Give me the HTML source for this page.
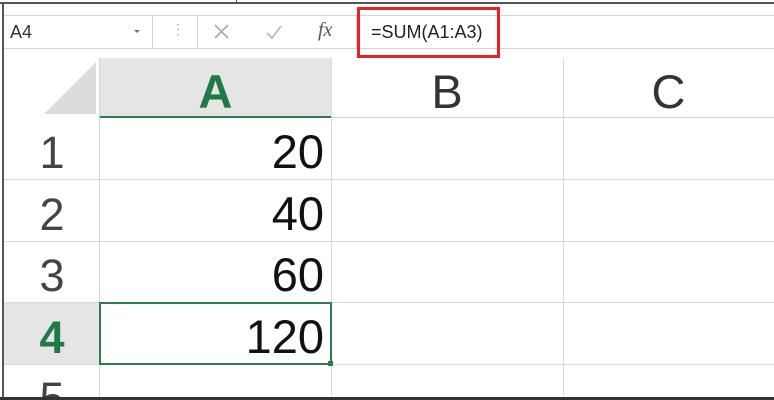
<!DOCTYPE html>
<html style="width:774px;height:400px;overflow:hidden"><head><meta charset="utf-8"><style>
*{margin:0;padding:0;box-sizing:border-box}
body{width:774px;height:400px;background:#fff;position:relative;overflow:hidden;font-family:"Liberation Sans",Arial,sans-serif}
.a{position:absolute}
.t{position:absolute;line-height:1}
</style></head><body>
<div class="a" style="left:0;top:2px;width:774px;height:2px;background:#555"></div>
<div class="a" style="left:2px;top:2px;width:2px;height:398px;background:#555"></div>
<div class="a" style="left:236px;top:0;width:1px;height:3px;background:#555"></div>
<div class="a" style="left:4px;top:15px;width:770px;height:1px;background:#d4d4d4"></div>
<div class="a" style="left:4px;top:48px;width:770px;height:1px;background:#d4d4d4"></div>
<div class="a" style="left:4px;top:15px;width:149px;height:34px;border:1px solid #d4d4d4;border-left:none"></div>
<div class="t" style="left:10px;top:23px;font-size:18px;color:#333">A4</div>
<div class="a" style="left:134px;top:30px;border-left:3px solid transparent;border-right:3px solid transparent;border-top:3px solid #777"></div>
<div class="t" style="left:171px;top:22px;font-size:14px;color:#aaa">⋮</div>
<div class="a" style="left:197px;top:15px;width:160px;height:34px;border:1px solid #d4d4d4"></div>
<svg class="a" style="left:212px;top:22px" width="100" height="22"><path d="M3 3L16 16M16 3L3 16" stroke="#aaa" stroke-width="1.6" fill="none"/><path d="M55 11L60 16L69 4" stroke="#bbb" stroke-width="1.8" fill="none"/></svg>
<div class="t" style="left:318px;top:20px;font-size:20px;font-style:italic;font-family:'Liberation Serif',serif;color:#555">fx</div>
<div class="a" style="left:357px;top:7px;width:143px;height:51px;border:3px solid #e3222b"></div>
<div class="t" style="left:371px;top:23px;font-size:18px;color:#222">=SUM(A1:A3)</div>
<div class="a" style="left:100px;top:58px;width:231px;height:59px;background:#e5e5e5"></div>
<div class="a" style="left:100px;top:116px;width:231px;height:2px;background:#2e7d4f"></div>
<svg class="a" style="left:40px;top:58px" width="60" height="59"><polygon points="56,4 56,56 4,56" fill="#dcdcdc"/></svg>
<div class="a" style="left:4px;top:302px;width:96px;height:62px;background:#e5e5e5"></div>
<div class="a" style="left:99px;top:58px;width:1px;height:342px;background:#d4d4d4"></div>
<div class="a" style="left:331px;top:58px;width:1px;height:342px;background:#d9d9d9"></div>
<div class="a" style="left:563px;top:58px;width:1px;height:342px;background:#d9d9d9"></div>
<div class="a" style="left:331px;top:117px;width:443px;height:1px;background:#d4d4d4"></div>
<div class="a" style="left:4px;top:179px;width:770px;height:1px;background:#d9d9d9"></div>
<div class="a" style="left:4px;top:241px;width:770px;height:1px;background:#d9d9d9"></div>
<div class="a" style="left:4px;top:302px;width:770px;height:1px;background:#d9d9d9"></div>
<div class="a" style="left:4px;top:364px;width:770px;height:1px;background:#d9d9d9"></div>
<div class="t" style="left:100px;top:68px;width:231px;text-align:center;font-size:47px;font-weight:bold;color:#1f7a45">A</div>
<div class="t" style="left:331px;top:68px;width:232px;text-align:center;font-size:47px;color:#333">B</div>
<div class="t" style="left:563px;top:68px;width:211px;text-align:center;font-size:47px;color:#333">C</div>
<div class="t" style="left:4px;top:130px;width:96px;text-align:center;font-size:45px;color:#444">1</div>
<div class="t" style="left:4px;top:192px;width:96px;text-align:center;font-size:45px;color:#444">2</div>
<div class="t" style="left:4px;top:253px;width:96px;text-align:center;font-size:45px;color:#444">3</div>
<div class="t" style="left:4px;top:315px;width:96px;text-align:center;font-size:45px;font-weight:bold;color:#1f7a45">4</div>
<div class="t" style="left:4px;top:376px;width:96px;height:21px;overflow:hidden;text-align:center;font-size:45px;color:#444">5</div>
<div class="t" style="left:100px;top:128px;width:224px;text-align:right;font-size:47px;color:#111">20</div>
<div class="t" style="left:100px;top:190px;width:224px;text-align:right;font-size:47px;color:#111">40</div>
<div class="t" style="left:100px;top:251px;width:224px;text-align:right;font-size:47px;color:#111">60</div>
<div class="t" style="left:100px;top:313px;width:224px;text-align:right;font-size:47px;color:#111">120</div>
<div class="a" style="left:99px;top:302px;width:233px;height:63px;border:2px solid #2e7d4f"></div>
<div class="a" style="left:328px;top:361px;width:5px;height:5px;background:#2e7d4f"></div>
<div class="a" style="left:0;top:397px;width:774px;height:3px;background:#333"></div>
</body></html>
